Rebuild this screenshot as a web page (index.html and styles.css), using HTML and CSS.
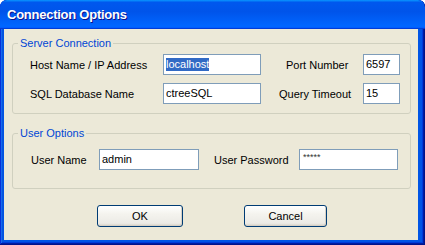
FILE: index.html
```html
<!DOCTYPE html>
<html>
<head>
<meta charset="utf-8">
<title>Connection Options</title>
<link rel="stylesheet" href="styles.css">
</head>
<body>
<div class="window">
  <div class="titlebar"><span class="title">Connection Options</span></div>
  <div class="client">
    <fieldset class="group group-server">
      <legend>Server Connection</legend>
      <div class="server-grid">
        <span class="lbl">Host Name / IP Address</span>
        <div class="field"><span class="sel">localhost</span></div>
        <span class="lbl lbl-port">Port Number</span>
        <div class="field">6597</div>
        <span class="lbl">SQL Database Name</span>
        <div class="field">ctreeSQL</div>
        <span class="lbl lbl-timeout">Query Timeout</span>
        <div class="field">15</div>
      </div>
    </fieldset>
    <fieldset class="group group-user">
      <legend>User Options</legend>
      <div class="user-grid">
        <span class="lbl">User Name</span>
        <div class="field">admin</div>
        <span class="lbl lbl-pass">User Password</span>
        <div class="field field-pw">*****</div>
      </div>
    </fieldset>
    <div class="buttons">
      <button class="btn btn-ok">OK</button>
      <button class="btn btn-cancel">Cancel</button>
    </div>
  </div>
</div>
</body>
</html>
```
FILE: styles.css
```css
* { box-sizing: border-box; }
html, body { margin: 0; padding: 0; background: #ffffff; }
body {
  font-family: "Liberation Sans", Arial, sans-serif;
  font-size: 11px;
  color: #000;
}
.window {
  width: 425px;
  height: 245px;
  background: #0055e5;
  border-radius: 7px 7px 0 0;
  overflow: hidden;
  display: flex;
  flex-direction: column;
  box-shadow: inset -1px -1px #00138c, inset 1px 1px #0831d9, inset -2px -2px #001ea0, inset 2px 2px #166aee, inset -3px -3px #003bda, inset 3px 3px #0855dd;
}
.titlebar {
  height: 29px;
  flex: none;
  display: flex;
  align-items: center;
  padding-left: 7px;
  padding-bottom: 1px;
  background: linear-gradient(180deg, #0997ff, #0058ee 8%, #0054ea 40%, #0066ff 88%, #0066ff 93%, #005bff 95%, #003dd7 96%, #003dd7);
  border-radius: 7px 7px 0 0;
}
.title {
  color: #ffffff;
  font-weight: bold;
  font-size: 13px;
  letter-spacing: -0.25px;
  text-shadow: 1px 1px #0f1089;
}
.client {
  margin: 0 7px 5px 4px;
  height: 211px;
  background: #ece9d8;
  padding: 7px 7px 0 8px;
}
.group {
  margin: 0;
  padding: 0;
  border: 1px solid #d0d0bf;
  border-radius: 3px;
  min-width: 0;
}
.group legend {
  margin-left: 5px;
  padding: 0 2px;
  color: #0046d5;
  line-height: 14px;
  font-size: 11px;
}
.group-server { padding-bottom: 9px; }
.group-user { margin-top: 12px; padding-bottom: 18px; }
.server-grid {
  display: grid;
  grid-template-columns: 133px 98px 102px 37px;
  grid-auto-rows: 21px;
  row-gap: 8px;
  padding-left: 17px;
  margin-top: 4px;
  align-items: center;
}
.user-grid {
  display: grid;
  grid-template-columns: 68px 100px 100px 99px;
  grid-auto-rows: 21px;
  padding-left: 18px;
  margin-top: 9px;
  align-items: center;
}
.lbl { white-space: nowrap; }
.lbl-port { padding-left: 25px; }
.lbl-timeout { padding-left: 18px; }
.lbl-pass { padding-left: 15px; }
.field {
  height: 21px;
  border: 1px solid #7f9db9;
  background: #ffffff;
  padding: 0 2px;
  display: flex;
  align-items: center;
  line-height: 13px;
  white-space: nowrap;
  overflow: hidden;
}
.field-pw {
  align-items: flex-start;
  font-size: 9px;
  line-height: 10px;
  padding-top: 2px;
  padding-left: 3px;
  color: #333;
}
.sel {
  background: #316ac5;
  color: #ffffff;
  line-height: 13px;
}
.buttons {
  display: flex;
  margin-top: 16px;
  padding-left: 85px;
  gap: 61px;
}
.btn {
  height: 22px;
  padding: 0;
  margin: 0;
  font-family: "Liberation Sans", Arial, sans-serif;
  font-size: 11px;
  color: #000;
  border: 1px solid #003c74;
  border-radius: 3px;
  background: linear-gradient(180deg, #ffffff, #f4f3ee 40%, #ecebe6 86%, #d6d0c5);
  box-shadow: inset -1px -1px #d6d0c5;
}
.btn-ok { width: 86px; }
.btn-cancel { width: 83px; }
```
